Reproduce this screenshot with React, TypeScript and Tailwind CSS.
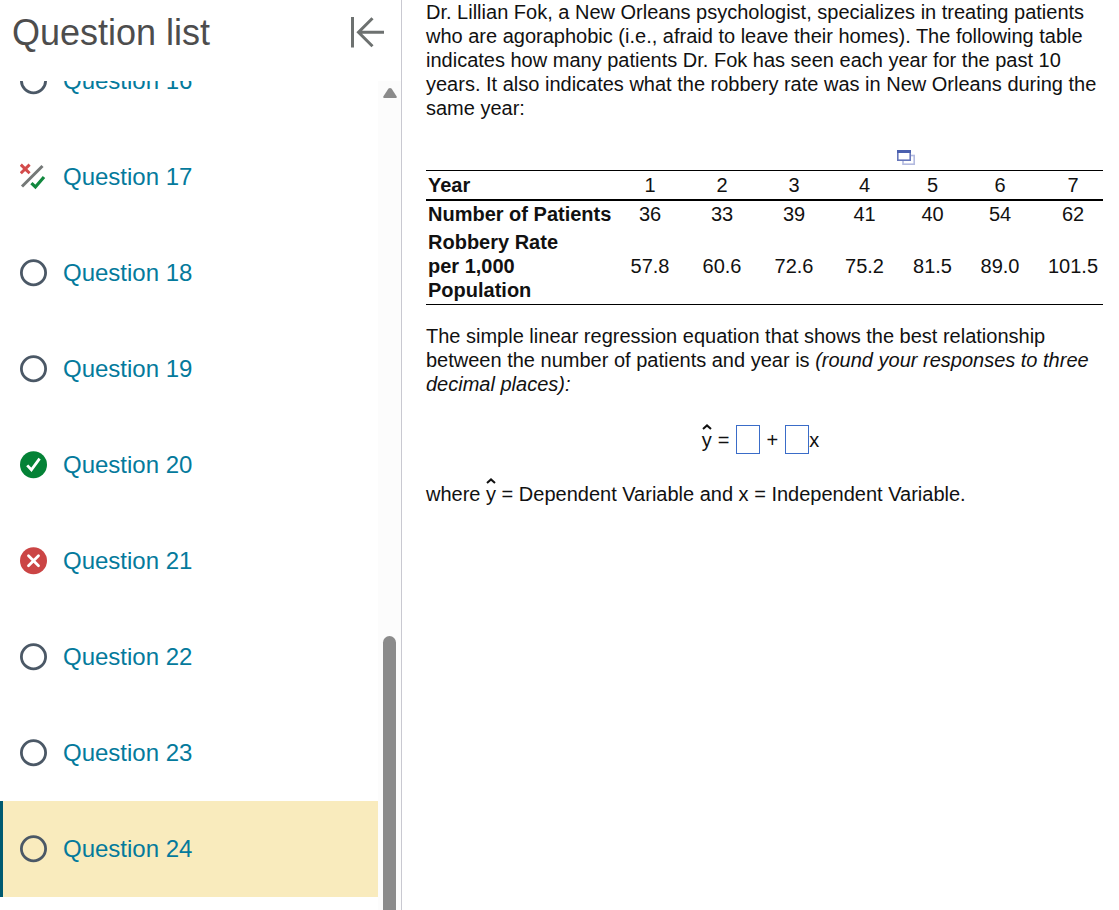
type Status = "open" | "partial" | "correct" | "incorrect";

const questions: { id: number; status: Status }[] = [
  { id: 16, status: "open" },
  { id: 17, status: "partial" },
  { id: 18, status: "open" },
  { id: 19, status: "open" },
  { id: 20, status: "correct" },
  { id: 21, status: "incorrect" },
  { id: 22, status: "open" },
  { id: 23, status: "open" },
  { id: 24, status: "open" },
];

const currentId = 24;

const years = [1, 2, 3, 4, 5, 6, 7];
const patients = [36, 33, 39, 41, 40, 54, 62];
const robberyRates = ["57.8", "60.6", "72.6", "75.2", "81.5", "89.0", "101.5"];

function StatusIcon({ status }: { status: Status }) {
  return (
    <svg
      viewBox="0 0 27 28"
      className="h-7 w-[27px] shrink-0"
      fill="none"
      aria-hidden="true"
    >
      {status === "open" && (
        <circle cx="13.5" cy="13.7" r="12.1" stroke="#4b5866" strokeWidth="2.8" />
      )}
      {status === "partial" && (
        <>
          <path d="M2 23.5 22.5 3" stroke="#747877" strokeWidth="3" />
          <path d="m.8 1.6 8.8 8.6M9.6 1.600.8 10.200" stroke="#d34b4b" strokeWidth="3" />
          <path d="m11.400 20.200 4 3.800 8.600-10" stroke="#12883f" strokeWidth="3.200" />
        </>
      )}
      {status === "correct" && (
        <>
          <circle cx="13.5" cy="13.7" r="13.5" fill="#048236" />
          <path d="m7.2 14.4 4.200 4.400L19.600 7.600" stroke="#fff" strokeWidth="2.8" />
        </>
      )}
      {status === "incorrect" && (
        <>
          <circle cx="13.5" cy="13.7" r="13.5" fill="#cb4545" />
          <path
            d="m8.500 8.700 10 10m0-10-10 10"
            stroke="#fff"
            strokeWidth="2.8"
            strokeLinecap="round"
          />
        </>
      )}
    </svg>
  );
}

function YHat() {
  return (
    <span className="relative inline-block">
      y
      <svg
        viewBox="0 0 10 6"
        className="absolute -top-1 left-0 h-[6px] w-[10px]"
        fill="none"
        aria-label="hat"
      >
        <path d="M1 5 5 1.400 9 5" stroke="#111" strokeWidth="2" />
      </svg>
    </span>
  );
}

function QuestionList() {
  return (
    <aside className="flex w-[402px] shrink-0 flex-col border-r border-[#c9c9d1]">
      <header className="flex h-[81px] shrink-0 items-start justify-between pt-[13px] pr-4 pl-3">
        <h1 className="text-[36px] leading-10 text-[#4d4d4d]">Question list</h1>
        <button type="button" aria-label="Collapse question list" className="pt-1">
          <svg
            viewBox="0 0 34 31"
            className="h-[31px] w-[34px]"
            fill="none"
            stroke="#6d7170"
            strokeWidth="3"
          >
            <path d="M1.500 0v30.500M33 15.300H7.500M21.500 1.200 7.500 15.300l14 14" />
          </svg>
        </button>
      </header>

      <div className="flex min-h-0 flex-1">
        <nav className="flex flex-1 flex-col justify-end overflow-hidden pb-[13px]">
          {questions.map((q) => (
            <a
              key={q.id}
              href={`#question-${q.id}`}
              className={
                q.id === currentId
                  ? "flex h-24 shrink-0 items-center gap-4 border-l-3 border-[#005a70] bg-[#f9ebbd] pl-[17px] text-2xl text-[#047a9c]"
                  : "flex h-24 shrink-0 items-center gap-4 border-l-3 border-transparent pl-[17px] text-2xl text-[#047a9c]"
              }
            >
              <StatusIcon status={q.status} />
              Question {q.id}
            </a>
          ))}
        </nav>
        <div className="flex w-[23px] flex-col items-center justify-between bg-[#fcfcfc] pt-[7px]">
          <svg viewBox="0 0 14 10" className="h-[10px] w-[14px]" aria-hidden="true">
            <path d="M5.500.6q1.500-1 3 0l5.200 8Q14 10 13 10H1Q0 10 .3 8.600Z" fill="#8b8b8b" />
          </svg>
          <div className="h-1/3 w-[13px] rounded-t-full bg-[#8b8b8b]" />
        </div>
      </div>
    </aside>
  );
}

function DataTable() {
  return (
    <table className="w-full table-fixed border-separate border-spacing-0 border-y border-black text-center">
      <colgroup>
        <col />
        <col className="w-[72px]" />
        <col className="w-[72px]" />
        <col className="w-[72px]" />
        <col className="w-[69px]" />
        <col className="w-[67px]" />
        <col className="w-[68px]" />
        <col className="w-[69px]" />
      </colgroup>
      <thead>
        <tr>
          <th scope="row" className="border-b-2 border-black py-0.5 pl-0.5 text-left font-bold">
            Year
          </th>
          {years.map((year) => (
            <th
              key={year}
              scope="col"
              className="border-b-2 border-black py-0.5 font-normal last:pl-[9px]"
            >
              {year}
            </th>
          ))}
        </tr>
      </thead>
      <tbody>
        <tr>
          <th scope="row" className="py-px pl-0.5 text-left font-bold whitespace-nowrap">
            Number of Patients
          </th>
          {patients.map((count, i) => (
            <td key={years[i]} className="py-px last:pl-[9px]">
              {count}
            </td>
          ))}
        </tr>
        <tr>
          <th scope="row" className="pt-[3px] pb-0.5 pl-0.5 text-left font-bold">
            Robbery Rate
            <br />
            per 1,000
            <br />
            Population
          </th>
          {robberyRates.map((rate, i) => (
            <td key={years[i]} className="pt-[3px] pb-0.5 last:pl-[9px]">
              {rate}
            </td>
          ))}
        </tr>
      </tbody>
    </table>
  );
}

function Exercise() {
  return (
    <main className="min-w-0 flex-1 overflow-hidden pr-4 pl-6 text-xl leading-6 text-[#111]">
      <p>
        Dr. Lillian Fok, a New Orleans psychologist, specializes in treating patients
        <br />
        who are agoraphobic (i.e., afraid to leave their homes). The following table
        <br />
        indicates how many patients Dr. Fok has seen each year for the past 10
        <br />
        years. It also indicates what the robbery rate was in New Orleans during the
        <br />
        same year:
      </p>

      <div className="flex justify-end pt-[30px] pr-[188px] pb-[5px]">
        <button type="button" aria-label="Open table in a new window">
          <svg viewBox="0 0 18 15" className="block h-[15px] w-[18px]" fill="none">
            <rect x="6" y="5.5" width="11.2" height="8.7" fill="#fff" stroke="#b3badf" strokeWidth="1.6" />
            <rect x=".8" y=".8" width="12.4" height="9.4" fill="#fff" stroke="#6676ba" strokeWidth="1.6" />
            <path d="M0 1.5h14" stroke="#4a5fae" strokeWidth="3" />
          </svg>
        </button>
      </div>

      <DataTable />

      <p className="mt-[19px]">
        The simple linear regression equation that shows the best relationship
        <br />
        between the number of patients and year is <em>(round your responses to three</em>
        <br />
        <em>decimal places):</em>
      </p>

      <div className="mt-[29px] flex items-center justify-center pr-2">
        <YHat />
        <span className="px-1.5">=</span>
        <input
          type="text"
          aria-label="Intercept"
          className="h-[29px] w-6 border border-[#3a6cc8] text-center"
        />
        <span className="px-[7px]">+</span>
        <input
          type="text"
          aria-label="Slope"
          className="h-[29px] w-6 border border-[#3a6cc8] text-center"
        />
        <span>x</span>
      </div>

      <p className="mt-7">
        where <YHat /> = Dependent Variable and x = Independent Variable.
      </p>
    </main>
  );
}

export default function App() {
  return (
    <div className="flex h-screen overflow-hidden bg-white font-['Liberation_Sans',Arial,sans-serif]">
      <QuestionList />
      <Exercise />
    </div>
  );
}
